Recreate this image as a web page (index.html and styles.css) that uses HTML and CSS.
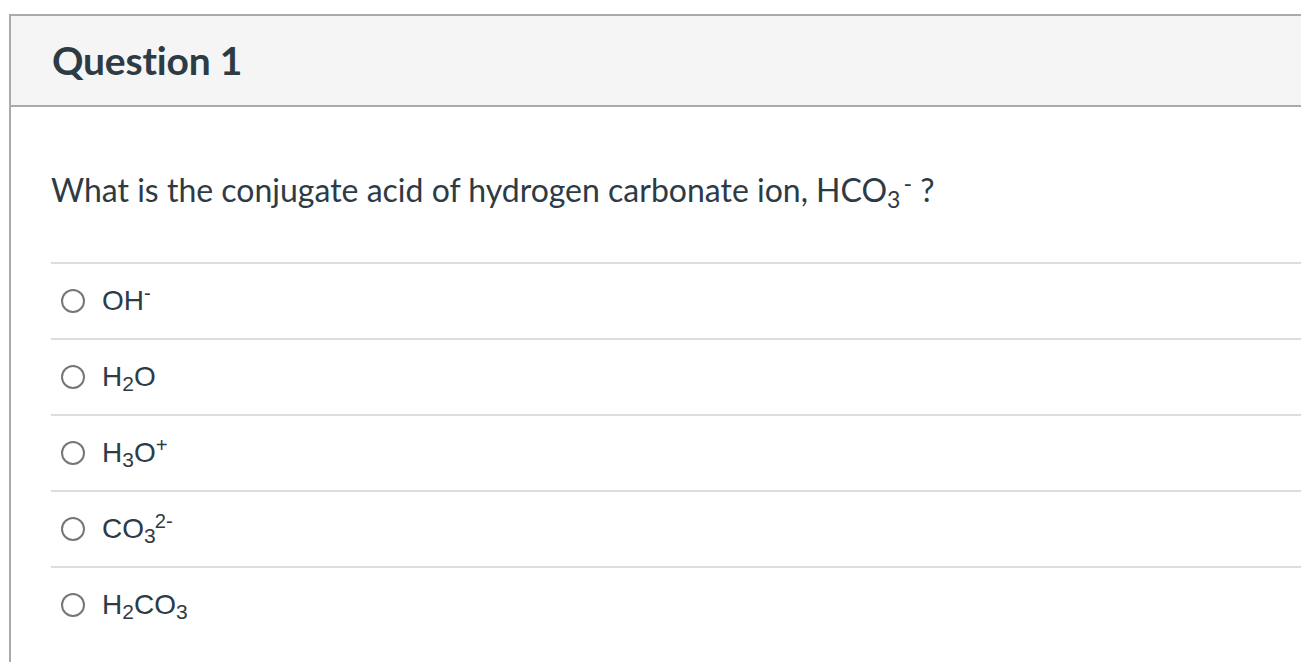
FILE: index.html
```html
<!DOCTYPE html>
<html>
<head>
<meta charset="utf-8">
<link rel="stylesheet" href="styles.css">
</head>
<body>
<div class="page">
  <div class="quiz">
    <div class="quiz-header">
      <h2 class="quiz-title">Question 1</h2>
    </div>
    <div class="quiz-body">
      <p class="question">What is the conjugate acid of hydrogen carbonate ion, HCO<sub class="qsub">3</sub><sup class="qsup">-</sup> ?</p>
      <div class="answers">
        <div class="answer"><span class="radio"></span><span class="label">OH<sup class="sup">-</sup></span></div>
        <div class="answer"><span class="radio"></span><span class="label">H<sub class="sub">2</sub>O</span></div>
        <div class="answer"><span class="radio"></span><span class="label">H<sub class="sub">3</sub>O<sup class="sup">+</sup></span></div>
        <div class="answer"><span class="radio"></span><span class="label">CO<sub class="sub">3</sub><sup class="sup sup-shift">2-</sup></span></div>
        <div class="answer"><span class="radio"></span><span class="label">H<sub class="sub">2</sub>CO<sub class="sub">3</sub></span></div>
      </div>
    </div>
  </div>
</div>
</body>
</html>
```

FILE: styles.css
```css
html, body {
  margin: 0;
  padding: 0;
  background: #ffffff;
  overflow: hidden;
}

.page {
  padding: 14px 0 0 9px;
  height: 662px;
  box-sizing: border-box;
}

.quiz {
  border: 2px solid #aaaaaa;
  border-right: none;
  border-bottom: none;
  height: 100%;
  color: #2d3b45;
  font-family: Lato, "Open Sans", sans-serif;
}

.quiz-header {
  background: #f5f5f5;
  border-bottom: 2px solid #aaaaaa;
  height: 89px;
  box-sizing: content-box;
  padding: 0 0 0 41px;
}

.quiz-title {
  margin: 0;
  padding-top: 21px;
  font-size: 39px;
  line-height: 46px;
  font-weight: 700;
  letter-spacing: -0.2px;
}

.quiz-body {
  padding: 0 0 0 40px;
}

.question {
  margin: 0;
  padding-top: 64px;
  font-size: 32px;
  line-height: 38px;
  font-weight: 400;
}

.qsub {
  font-size: 0.72em;
  vertical-align: -0.28em;
  line-height: 0;
}

.qsup {
  font-size: 0.72em;
  vertical-align: 0.45em;
  line-height: 0;
  margin-left: 3px;
}

.answers {
  margin-top: 53px;
}

.answer {
  display: flex;
  align-items: center;
  height: 74px;
  border-top: 2px solid #dddddd;
  font-family: "Liberation Sans", Arial, sans-serif;
  font-size: 28px;
}

.radio {
  width: 20px;
  height: 20px;
  border: 2px solid #777777;
  border-radius: 50%;
  margin-left: 10px;
  margin-right: 17px;
  flex: none;
}

.label {
  line-height: 32px;
}

.sub {
  font-size: 0.75em;
  vertical-align: -0.25em;
  line-height: 0;
}

.sup {
  font-size: 0.72em;
  vertical-align: 0.5em;
  line-height: 0;
}

.sup-shift {
  margin-left: -1px;
}
```
